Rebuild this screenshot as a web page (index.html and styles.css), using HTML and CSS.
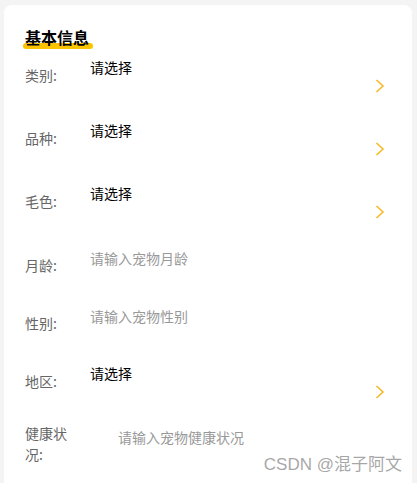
FILE: index.html
```html
<!DOCTYPE html>
<html lang="zh">
<head>
<meta charset="utf-8">
<link rel="stylesheet" href="styles.css">
</head>
<body>
<div class="card">
  <div class="title-wrap"><span class="title">基本信息</span></div>
  <div class="row select-row">
    <div class="label">类别:</div>
    <div class="value">请选择</div>
    <svg class="arrow" width="10" height="14" viewBox="0 0 10 14"><polyline points="1.5,1 8,7 1.5,13" /></svg>
  </div>
  <div class="row select-row">
    <div class="label">品种:</div>
    <div class="value">请选择</div>
    <svg class="arrow" width="10" height="14" viewBox="0 0 10 14"><polyline points="1.5,1 8,7 1.5,13" /></svg>
  </div>
  <div class="row select-row">
    <div class="label">毛色:</div>
    <div class="value">请选择</div>
    <svg class="arrow" width="10" height="14" viewBox="0 0 10 14"><polyline points="1.5,1 8,7 1.5,13" /></svg>
  </div>
  <div class="row input-row">
    <div class="label">月龄:</div>
    <div class="value placeholder">请输入宠物月龄</div>
  </div>
  <div class="row input-row tall">
    <div class="label">性别:</div>
    <div class="value placeholder">请输入宠物性别</div>
  </div>
  <div class="row select-row">
    <div class="label">地区:</div>
    <div class="value">请选择</div>
    <svg class="arrow" width="10" height="14" viewBox="0 0 10 14"><polyline points="1.5,1 8,7 1.5,13" /></svg>
  </div>
  <div class="row health-row">
    <div class="label health-label">健康状况:</div>
    <div class="value placeholder health-value">请输入宠物健康状况</div>
  </div>
</div>
<div class="watermark">CSDN @混子阿文</div>
</body>
</html>
```
FILE: styles.css
```css
html, body {
  margin: 0;
  padding: 0;
}
body {
  background: #f4f4f4;
  font-family: "Noto Sans CJK SC", "Noto Sans", sans-serif;
  padding: 5px 5px 0 4px;
  height: 483px;
  box-sizing: border-box;
  overflow: hidden;
  position: relative;
}
.card {
  background: #fff;
  border-radius: 8px 8px 0 0;
  padding: 20px 27px 0 21px;
  height: 100%;
  box-sizing: border-box;
  overflow: hidden;
}
.title-wrap {
  height: 32px;
}
.title {
  position: relative;
  display: inline-block;
  font-size: 16px;
  line-height: 22px;
  font-weight: 700;
  color: #000;
  z-index: 1;
}
.title::after {
  content: "";
  position: absolute;
  left: -2px;
  right: -4px;
  bottom: -1px;
  height: 6px;
  border-radius: 3px;
  background: #fcc300;
  z-index: -1;
}
.row {
  display: flex;
  align-items: flex-start;
  font-size: 14px;
  line-height: 20px;
}
.select-row {
  height: 63px;
}
.input-row {
  height: 58px;
}
.input-row.tall {
  height: 59px;
}
.label {
  width: 65px;
  color: #666;
  margin-top: 8px;
  flex-shrink: 0;
}
.input-row .label {
  margin-top: 9px;
}
.value {
  flex: 1;
  color: #000;
}
.placeholder {
  color: #999;
  padding-top: 2px;
}
.arrow {
  margin-top: 22px;
  fill: none;
  stroke: #f6b928;
  stroke-width: 1.6;
}
.health-row {
  margin-top: -3px;
}
.health-label {
  width: 45px;
  margin-top: 0;
  line-height: 21px;
  margin-right: 48px;
}
.health-value {
  padding-top: 4px;
}
.watermark {
  position: absolute;
  right: 15px;
  bottom: 8px;
  font-size: 17px;
  line-height: 20px;
  color: rgba(150, 150, 150, 0.85);
  font-family: "Liberation Sans", "Noto Sans CJK SC", sans-serif;
}
```
